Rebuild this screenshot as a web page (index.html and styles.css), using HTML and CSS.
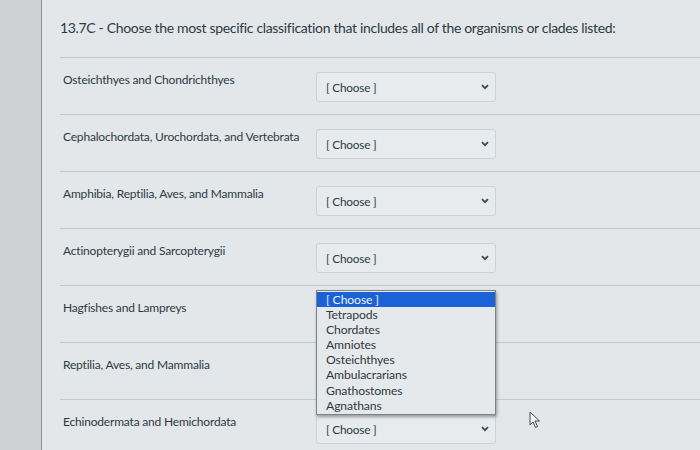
FILE: index.html
```html
<!DOCTYPE html>
<html>
<head>
<meta charset="utf-8">
<link rel="stylesheet" href="styles.css">
</head>
<body>
<div class="screen">
  <div class="edge"></div>
  <div class="content">
    <div class="title">13.7C - Choose the most specific classification that includes all of the organisms or clades listed:</div>
    <div class="rows">
      <div class="row">
        <div class="label">Osteichthyes and Chondrichthyes</div>
        <div class="select"><span>[ Choose ]</span><svg class="chev" width="8" height="6" viewBox="0 0 8 6"><path d="M1 1.2 L4 4.2 L7 1.2" fill="none" stroke="#3b4650" stroke-width="1.7"/></svg></div>
      </div>
      <div class="row">
        <div class="label">Cephalochordata, Urochordata, and Vertebrata</div>
        <div class="select"><span>[ Choose ]</span><svg class="chev" width="8" height="6" viewBox="0 0 8 6"><path d="M1 1.2 L4 4.2 L7 1.2" fill="none" stroke="#3b4650" stroke-width="1.7"/></svg></div>
      </div>
      <div class="row">
        <div class="label">Amphibia, Reptilia, Aves, and Mammalia</div>
        <div class="select"><span>[ Choose ]</span><svg class="chev" width="8" height="6" viewBox="0 0 8 6"><path d="M1 1.2 L4 4.2 L7 1.2" fill="none" stroke="#3b4650" stroke-width="1.7"/></svg></div>
      </div>
      <div class="row">
        <div class="label">Actinopterygii and Sarcopterygii</div>
        <div class="select"><span>[ Choose ]</span><svg class="chev" width="8" height="6" viewBox="0 0 8 6"><path d="M1 1.2 L4 4.2 L7 1.2" fill="none" stroke="#3b4650" stroke-width="1.7"/></svg></div>
      </div>
      <div class="row open">
        <div class="label">Hagfishes and Lampreys</div>
        <div class="select"><span>[ Choose ]</span></div>
        <ul class="listbox">
          <li class="sel">[ Choose ]</li>
          <li>Tetrapods</li>
          <li>Chordates</li>
          <li>Amniotes</li>
          <li>Osteichthyes</li>
          <li>Ambulacrarians</li>
          <li>Gnathostomes</li>
          <li>Agnathans</li>
        </ul>
      </div>
      <div class="row">
        <div class="label">Reptilia, Aves, and Mammalia</div>
      </div>
      <div class="row">
        <div class="label">Echinodermata and Hemichordata</div>
        <div class="select"><span>[ Choose ]</span><svg class="chev" width="8" height="6" viewBox="0 0 8 6"><path d="M1 1.2 L4 4.2 L7 1.2" fill="none" stroke="#3b4650" stroke-width="1.7"/></svg></div>
      </div>
    </div>
  </div>
  <svg class="cursor" width="12" height="18" viewBox="0 0 12 18"><path d="M1 1 L1 14 L4 11 L6.5 16.5 L8.5 15.5 L6 10 L10.5 10 Z" fill="#f2f4f5" stroke="#444" stroke-width="1"/></svg>
</div>
</body>
</html>
```

FILE: styles.css
```css
html, body {
  margin: 0;
  padding: 0;
}
body {
  width: 700px;
  height: 450px;
  overflow: hidden;
  background: #e3e7e9;
  font-family: Lato, "Open Sans", sans-serif;
  color: #2d3a43;
}
.screen {
  position: relative;
  display: flex;
  height: 450px;
}
.edge {
  width: 41px;
  flex: none;
  background: #cfd2d3;
  border-right: 1px solid #8d9194;
}
.content {
  flex: 1;
  padding-left: 18px;
}
.title {
  font-size: 14px;
  letter-spacing: -0.33px;
  line-height: 18px;
  padding-top: 19px;
  box-sizing: border-box;
  height: 58px;
  border-bottom: 1px solid #c4c9cc;
}
.row {
  position: relative;
  display: flex;
  height: 56px;
  border-bottom: 1px solid #c4c9cc;
}
.label {
  width: 256px;
  flex: none;
  font-size: 12px;
  letter-spacing: -0.19px;
  line-height: 16px;
  padding-top: 14px;
  padding-left: 3px;
  box-sizing: border-box;
}
.select {
  margin-top: 14px;
  width: 180px;
  height: 30px;
  box-sizing: border-box;
  border: 1px solid #cdd2d5;
  border-radius: 3px;
  background: #e7ebed;
  display: flex;
  align-items: center;
  justify-content: space-between;
  padding: 0 6px 0 9px;
  font-size: 11.8px;
  letter-spacing: -0.2px;
}
.chev {
  display: block;
}
.listbox {
  position: absolute;
  left: 256px;
  top: 4px;
  width: 180px;
  margin: 0;
  padding: 1px 0;
  list-style: none;
  box-sizing: border-box;
  background: #e6e9eb;
  border: 1px solid #7c8286;
  box-shadow: 1px 2px 3px rgba(0,0,0,0.35);
  font-size: 12.2px;
  letter-spacing: -0.12px;
  z-index: 2;
}
.listbox li {
  height: 15.1px;
  line-height: 15px;
  padding-left: 9px;
  color: #30383e;
}
.listbox li.sel {
  background: #1a62d6;
  color: #eef3ff;
}
.cursor {
  position: absolute;
  left: 529px;
  top: 411px;
}
```
